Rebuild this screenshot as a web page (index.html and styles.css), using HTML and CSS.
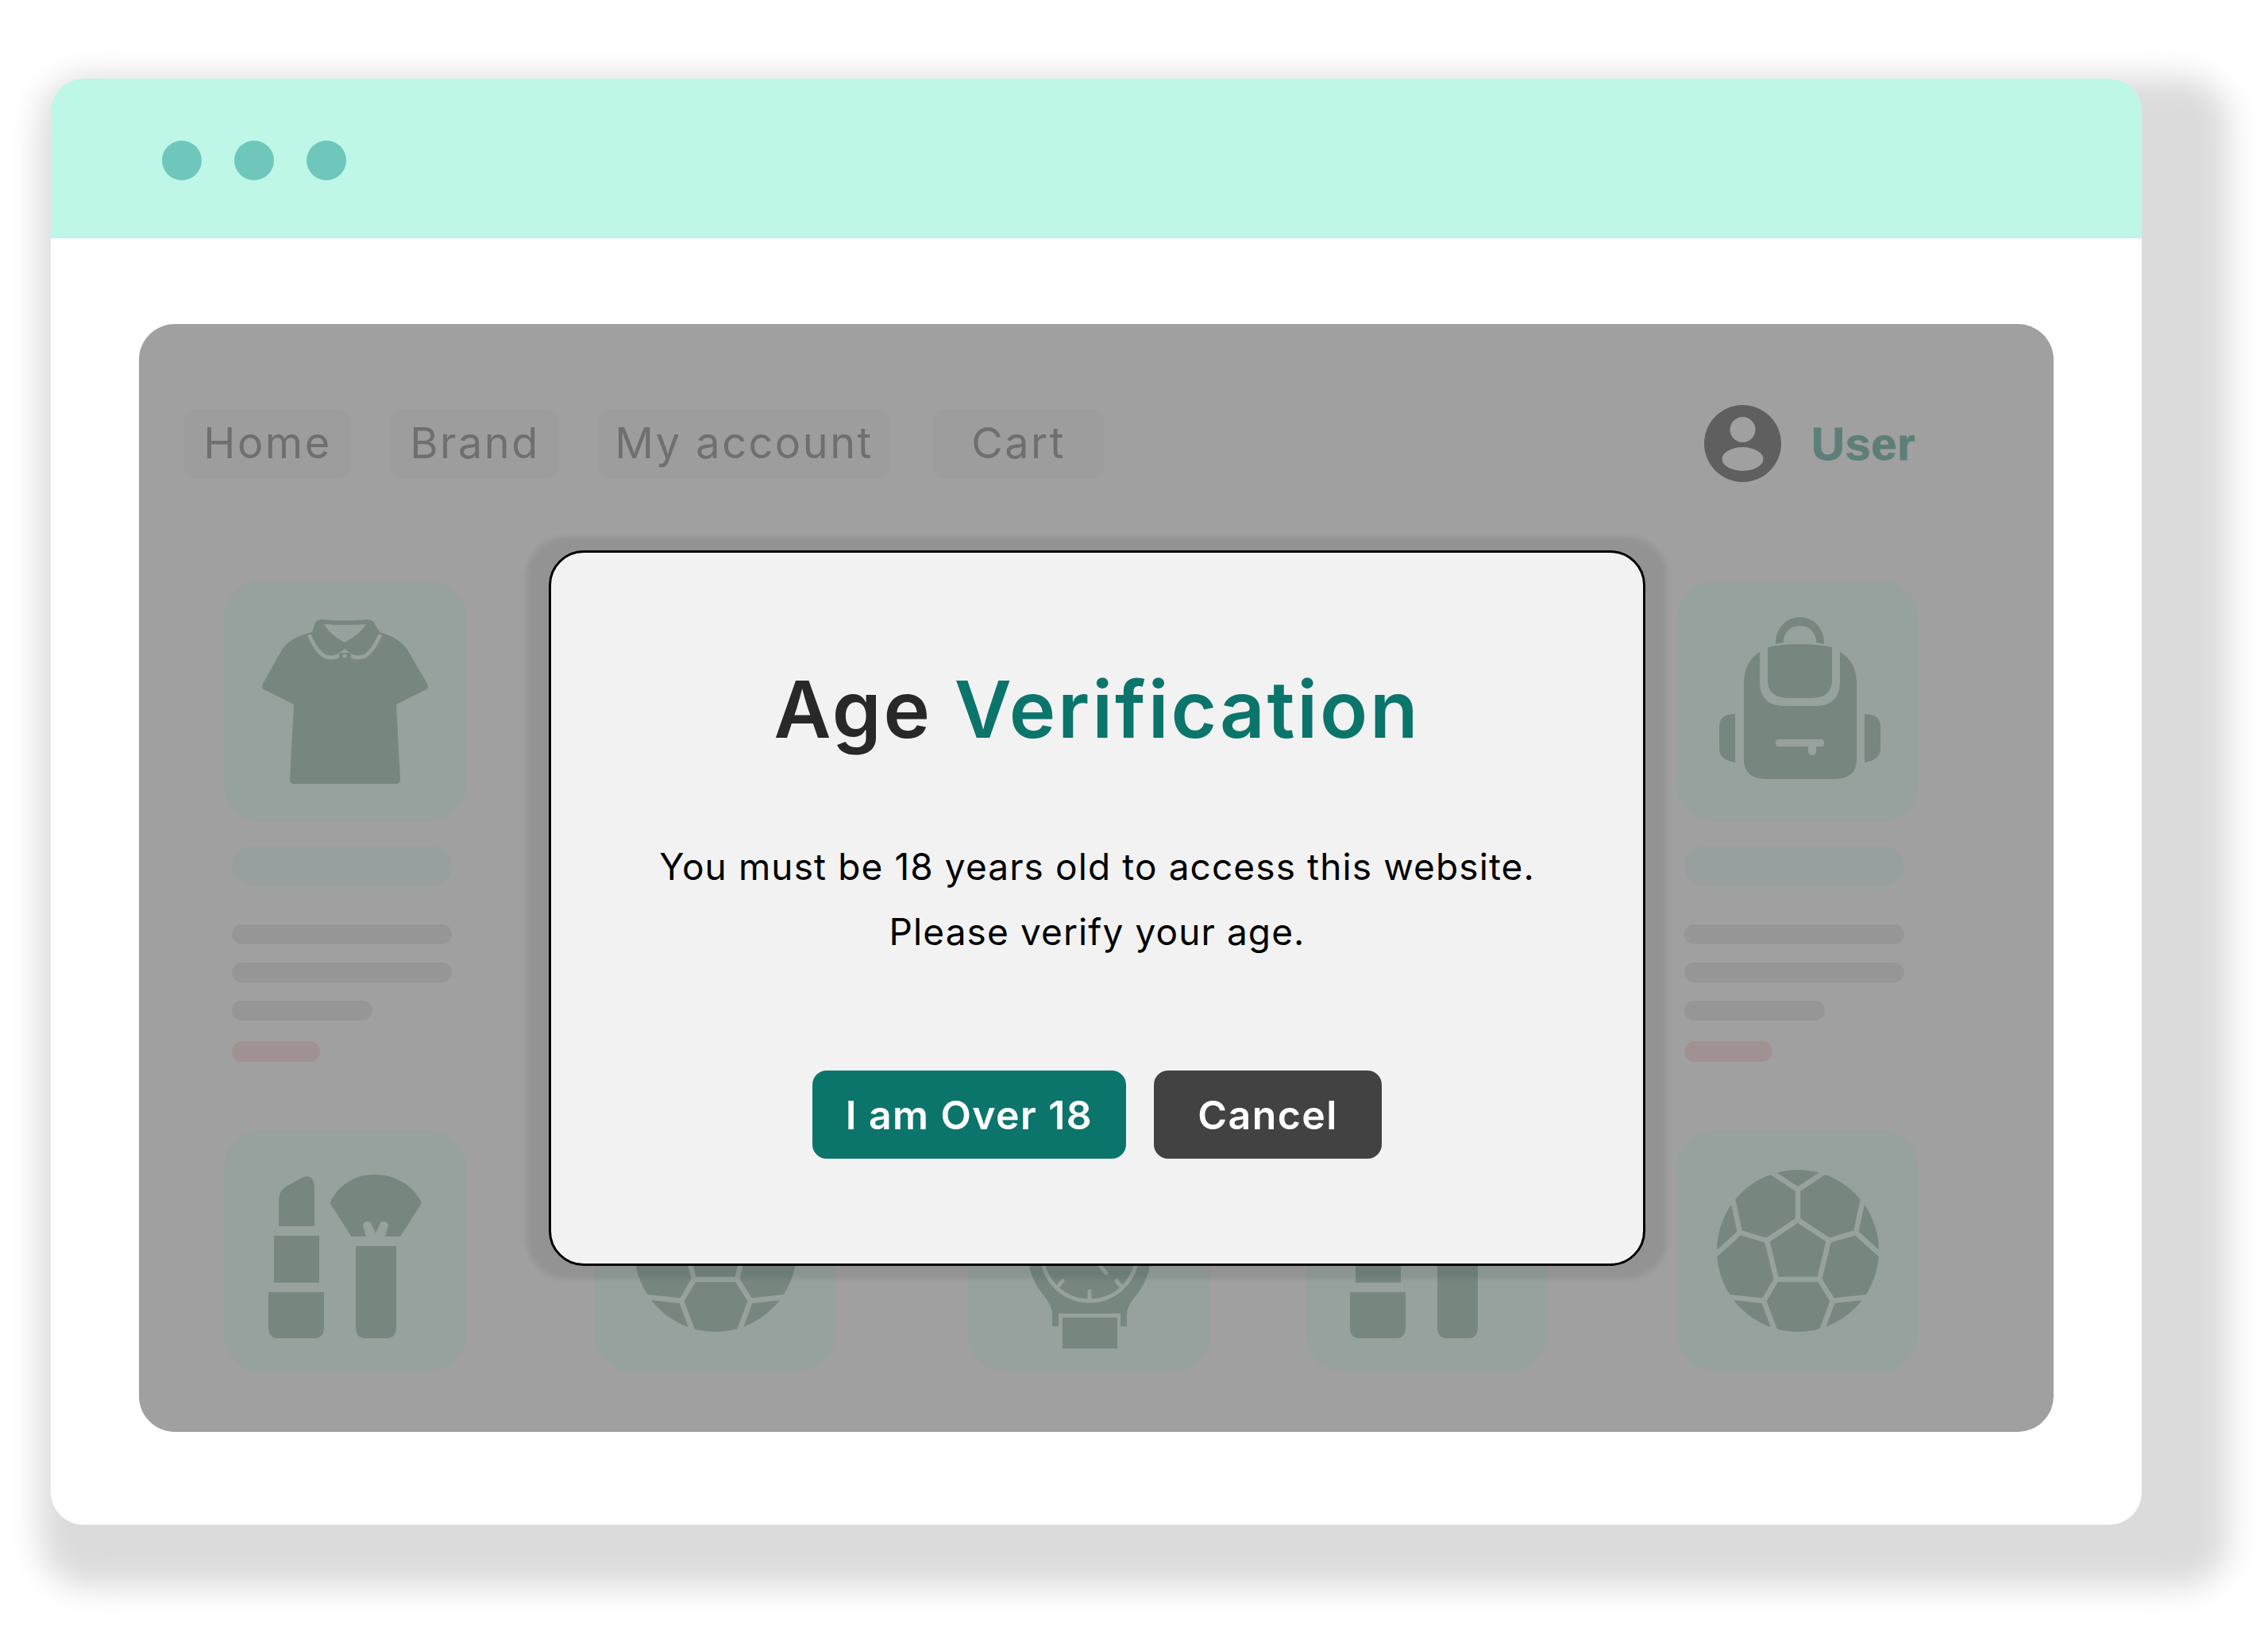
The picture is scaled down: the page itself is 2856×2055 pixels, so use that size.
FILE: index.html
```html
<!DOCTYPE html>
<html lang="en">
<head>
    <meta charset="UTF-8">
    <meta name="viewport" content="width=device-width, initial-scale=1.0">
    <title>Age Verification</title>
    <link rel="stylesheet" href="styles.css">
</head>
<body>
    <!-- icon set, reused by the product cards -->
    <svg class="icon-defs" aria-hidden="true">
        <symbol id="icon-shirt" viewBox="0 0 305 304">
            <path class="ink" d="M123 49 Q152 52 181 49 Q186 49 189 53 L196 65 Q220 71 231 87 L256 130 Q259 136 253 138 L217 156 L222 250 Q222 256 216 256 L89 256 Q83 256 83 250 L88 156 L52 138 Q46 136 49 130 L73 87 Q84 71 111 65 L115 53 Q118 49 123 49Z"/>
            <path class="cut" d="M126 55 Q152 57 179 55 Q172 67 152 78 Q132 67 126 55Z"/>
            <path class="cut-line" d="M108 70 Q120 97 134 97 Q145 97 152 89 Q159 97 170 97 Q184 97 196 70"/>
            <rect class="ink" x="145" y="91" width="15" height="20" rx="3"/>
            <circle class="cut" cx="152" cy="95" r="2.5"/>
        </symbol>
        <symbol id="icon-bag" viewBox="0 0 305 304">
            <path class="ink" d="M125 80 C125 35 186 35 186 80 L176 78 C176 50 135 50 135 78Z"/>
            <path class="ink" d="M115 84 Q155 76 196 84 V125 Q196 148 170 148 H141 Q115 148 115 125Z"/>
            <path class="ink" d="M105 90 V128 Q105 158 137 158 H174 Q206 158 206 128 V90 Q227 102 227 130 V226 Q227 250 197 250 H115 Q85 250 85 226 V130 Q85 102 105 90Z"/>
            <path class="cut" d="M128 200 H183 Q186 200 186 204.5 Q186 209 183 209 H176 V215 Q176 220 171 220 Q166 220 166 215 V209 H128 Q125 209 125 204.5 Q125 200 128 200Z"/>
            <path class="ink" d="M74 168 V229 Q54 226 54 212 V184 Q54 168 74 168Z"/>
            <path class="ink" d="M237 168 V229 Q257 226 257 212 V184 Q257 168 237 168Z"/>
        </symbol>
        <symbol id="icon-makeup" viewBox="0 0 305 304">
            <path class="ink" d="M69 121 V88 Q69 76 80 70 L98 60 Q112 54 114 70 V121Z"/>
            <rect class="ink" x="63" y="133" width="57" height="59"/>
            <path class="ink" d="M56 204 H126 V248 Q126 262 114 262 H68 Q56 262 56 248Z"/>
            <path class="ink" d="M190 56 C218 56 240 72 249 92 L222 134 H203 L207 120 Q206 115 202 115 Q198 115 197 117 L191 130 L185 117 Q184 115 181 115 Q176 115 175 120 L179 134 H160.5 L133.5 92 C142 72 162 56 190 56Z"/>
            <path class="ink" d="M166 146 H217 V248 Q217 262 205 262 H178 Q166 262 166 248Z"/>
        </symbol>
        <symbol id="icon-ball" viewBox="0 0 305 304">
            <circle class="ink" cx="153" cy="152" r="102"/>
            <path class="cut-line ball-line" d="M153 113 L192 139 L180 188 H126 L114 139Z M153 113 V75 M118 52 L153 75 L188 52 M114 139 L80 129 L70 82 M80 129 L48 158 M192 139 L226 129 L236 82 M226 129 L258 158 M126 188 L110 215 L64 210 M180 188 L197 215 L242 210 M110 215 L126 258 M197 215 L181 258"/>
        </symbol>
        <symbol id="icon-watch" viewBox="0 0 305 304">
            <path class="ink" d="M153 77 C196 77 231 112 231 155 Q229 188 211 209 Q200 222 200 232 V247 H192 V231 H114 V247 H106 V232 Q106 222 96 209 Q77 188 75 155 C75 112 110 77 153 77Z"/>
            <circle class="cut-line" cx="153" cy="155" r="60"/>
            <path class="cut-line" d="M153 203 V213 M119 190 L114 196 M187 190 L192 196 M153 155 L174 180"/>
            <rect class="ink" x="119" y="236" width="69" height="39"/>
        </symbol>
    </svg>

    <div class="window">
        <div class="titlebar">
            <span class="dot"></span>
            <span class="dot"></span>
            <span class="dot"></span>
        </div>

        <div class="window-body">
            <div class="shop">

                <!-- Nav -->
                <nav class="nav">
                    <a class="nav-item nav-home">Home</a>
                    <a class="nav-item nav-brand">Brand</a>
                    <a class="nav-item nav-account">My account</a>
                    <a class="nav-item nav-cart">Cart</a>
                    <div class="user">
                        <svg class="user-icon" viewBox="0 0 97 97">
                            <circle class="user-disc" cx="48.5" cy="48.5" r="48.5"/>
                            <ellipse class="user-cut" cx="48.5" cy="31" rx="16" ry="16"/>
                            <ellipse class="user-cut" cx="48.5" cy="68" rx="26" ry="15"/>
                        </svg>
                        <span class="user-name">User</span>
                    </div>
                </nav>

                <!-- Products -->
                <div class="products">
                    <div class="card">
                        <svg class="tile"><use href="#icon-shirt"/></svg>
                        <div class="card-title"></div>
                        <div class="line"></div>
                        <div class="line"></div>
                        <div class="line line-short"></div>
                        <div class="price"></div>
                    </div>
                    <div class="card">
                        <svg class="tile"><use href="#icon-bag"/></svg>
                    </div>
                    <div class="card">
                        <svg class="tile"><use href="#icon-watch"/></svg>
                    </div>
                    <div class="card">
                        <svg class="tile"><use href="#icon-shirt"/></svg>
                    </div>
                    <div class="card">
                        <svg class="tile"><use href="#icon-bag"/></svg>
                        <div class="card-title"></div>
                        <div class="line"></div>
                        <div class="line"></div>
                        <div class="line line-short"></div>
                        <div class="price"></div>
                    </div>

                    <div class="card">
                        <svg class="tile"><use href="#icon-makeup"/></svg>
                    </div>
                    <div class="card">
                        <svg class="tile"><use href="#icon-ball"/></svg>
                    </div>
                    <div class="card">
                        <svg class="tile"><use href="#icon-watch"/></svg>
                    </div>
                    <div class="card">
                        <svg class="tile"><use href="#icon-makeup"/></svg>
                    </div>
                    <div class="card">
                        <svg class="tile"><use href="#icon-ball"/></svg>
                    </div>
                </div>

                <!-- Age gate -->
                <div class="modal-shade"></div>
                <div class="modal">
                    <h2 class="modal-title">Age <span class="accent">Verification</span></h2>
                    <p class="modal-text">You must be 18 years old to access this website.<br>Please verify your age.</p>
                    <div class="modal-actions">
                        <button class="btn btn-confirm">I am Over 18</button>
                        <button class="btn btn-cancel">Cancel</button>
                    </div>
                </div>

            </div>
        </div>
    </div>
</body>
</html>
```

FILE: styles.css
```css
html {
    height: 100%;
}
body {
    margin: 0;
    min-height: 100%;
    padding: 99px 0 0 64px;
    box-sizing: border-box;
    background-color: #fff;
    font-family: Inter, "Noto Sans", sans-serif;
}
.icon-defs {
    position: absolute;
    width: 0;
    height: 0;
}
.window {
    position: relative;
    width: 2633px;
    height: 1821px;
    background: #fff;
    border-radius: 41px;
}
.window::before {
    content: "";
    position: absolute;
    inset: -2px -110px -78px -14px;
    border-radius: 60px;
    background-color: #dbdbdb;
    filter: blur(19px);
    z-index: -1;
}
.titlebar {
    height: 201px;
    padding: 5px 0 0 140px;
    display: flex;
    align-items: center;
    gap: 41px;
    background-color: #bef7e8;
    border-radius: 41px 41px 0 0;
    box-sizing: border-box;
}
.dot {
    width: 50px;
    height: 50px;
    border-radius: 50%;
    background-color: #6fc7bb;
}
.window-body {
    padding: 108px 111px 0;
}
.shop {
    position: relative;
    height: 1395px;
    padding: 102px 0 0 57px;
    box-sizing: border-box;
    background-color: #a0a0a0;
    border-radius: 45px;
}
.nav {
    display: flex;
    align-items: center;
    gap: 50px;
    padding-right: 174px;
}
.nav-item {
    height: 88px;
    line-height: 86px;
    text-align: center;
    font-size: 54px;
    letter-spacing: 2.5px;
    color: #6f6f6f;
    background-color: #9d9d9d;
    border-radius: 14px;
}
.nav-home { width: 210px; }
.nav-brand { width: 212px; }
.nav-account { width: 366px; }
.nav-cart { width: 215px; margin-left: 5px; }
.user {
    margin-left: auto;
    display: flex;
    align-items: center;
    gap: 38px;
}
.user-icon {
    width: 97px;
    height: 97px;
    display: block;
}
.user-disc { fill: #5f5f5f; }
.user-cut { fill: #a0a0a0; }
.user-name {
    font-family: "Liberation Sans", Arial, sans-serif;
    font-weight: 700;
    font-size: 58px;
    letter-spacing: 0.5px;
    -webkit-text-stroke: 1px #5e7f79;
    color: #5e7f79;
}
.products {
    margin: 124px 0 0 50px;
    display: grid;
    grid-template-columns: 466px 471px 425px 467px 305px;
    grid-template-rows: 692px auto;
}
.tile {
    display: block;
    width: 305px;
    height: 304px;
    background-color: #97a19d;
    border-radius: 48px;
}
.ink { fill: #778780; }
.cut { fill: #97a19d; }
.cut-line {
    fill: none;
    stroke: #97a19d;
    stroke-width: 5;
    stroke-linecap: round;
}
.ball-line {
    stroke-width: 6.5;
    stroke-linecap: butt;
    stroke-linejoin: miter;
}
.card-title {
    width: 277px;
    height: 49px;
    margin: 31px 0 0 10px;
    background-color: #98a09f;
    border-radius: 25px;
}
.line {
    width: 277px;
    height: 25px;
    margin: 23px 0 0 10px;
    background-color: #969696;
    border-radius: 13px;
}
.card-title + .line { margin-top: 49px; }
.line-short { width: 177px; }
.price {
    width: 111px;
    height: 26px;
    margin: 26px 0 0 10px;
    background-color: #a09292;
    border-radius: 13px;
}
.modal-shade {
    position: absolute;
    left: 488px;
    top: 268px;
    width: 1436px;
    height: 934px;
    border-radius: 50px;
    background-color: rgba(0, 0, 0, 0.08);
    filter: blur(3px);
}
.modal {
    position: absolute;
    left: 516px;
    top: 285px;
    width: 1381px;
    height: 901px;
    box-sizing: border-box;
    border: 3.5px solid #000;
    border-radius: 44px;
    background-color: #f2f2f2;
    text-align: center;
}
.modal-title {
    margin: 137px 0 0;
    font-size: 99px;
    letter-spacing: 2.8px;
    line-height: 120px;
    font-weight: 600;
    color: #282828;
}
.accent { color: #0b756b; }
.modal-text {
    margin: 97px 0 0;
    font-size: 46px;
    letter-spacing: 1.1px;
    line-height: 82px;
    color: #000;
}
.modal-actions {
    margin-top: 134px;
    display: flex;
    justify-content: center;
    gap: 35px;
}
.btn {
    height: 111px;
    padding: 0;
    border: none;
    border-radius: 18px;
    font-family: inherit;
    font-size: 50px;
    letter-spacing: 1.4px;
    font-weight: 600;
    color: #fff;
}
.btn-confirm {
    width: 395px;
    background-color: #0c756b;
}
.btn-cancel {
    width: 287px;
    background-color: #424242;
}
```
